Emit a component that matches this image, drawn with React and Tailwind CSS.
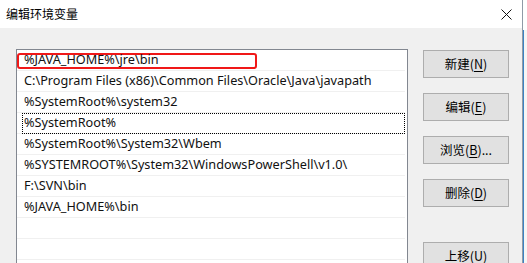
import React from "react";

const rows = [
  "%JAVA_HOME%\\jre\\bin",
  "C:\\Program Files (x86)\\Common Files\\Oracle\\Java\\javapath",
  "%SystemRoot%\\system32",
  "%SystemRoot%",
  "%SystemRoot%\\System32\\Wbem",
  "%SYSTEMROOT%\\System32\\WindowsPowerShell\\v1.0\\",
  "F:\\SVN\\bin",
  "%JAVA_HOME%\\bin",
  "",
  "",
];

const font = { fontFamily: '"Noto Sans", "Noto Sans CJK SC", sans-serif' };

function Btn({ label, hot, tail = "", className = "" }) {
  return (
    <div
      className={`w-[86px] h-[28px] border border-[#adadad] bg-[#e1e1e1] flex items-center justify-center text-[12.5px] text-[#000] ${className}`}
      style={{ fontFamily: '"Noto Sans CJK SC", sans-serif' }}
    >
      <span>
        {label}(<span className="underline underline-offset-2">{hot}</span>){tail}
      </span>
    </div>
  );
}

export default function App() {
  return (
    <div className="w-[527px] h-[263px] overflow-hidden flex bg-[#f0f0f0]">
      <div className="w-[523px] h-full flex flex-col border-r border-[#8f9aa6]">
        <div className="h-[28px] bg-white flex items-center justify-between pl-[6px] pr-[10px] shrink-0">
          <span
            className="text-[12px] text-black"
            style={{ fontFamily: '"Noto Sans CJK SC", sans-serif' }}
          >
            编辑环境变量
          </span>
          <svg width="11" height="11" viewBox="0 0 11 11" className="mt-[1px]">
            <path d="M0.5 0.5 L10.5 10.5 M10.5 0.5 L0.5 10.5" stroke="#111" strokeWidth="1" />
          </svg>
        </div>
        <div className="flex pl-[16px] pt-[21px] gap-[15px]">
          <div className="w-[392px] h-[300px] border border-[#828790] bg-white flex flex-col">
            {rows.map((r, i) => (
              <div
                key={i}
                className="relative h-[21px] shrink-0 border-b border-[#f0f0f0] mr-[2px] flex items-center pl-[7px] text-[12.7px] text-[#111] whitespace-nowrap"
                style={font}
              >
                {i === 0 && (
                  <div className="absolute left-0 top-[3px] w-[240px] h-[16px] border-2 border-[#f01818] rounded-[3px]" />
                )}
                {i === 3 && (
                  <div className="absolute left-[5px] right-0 top-0 bottom-[-1px] border border-dotted border-black" />
                )}
                <span className="relative">{r}</span>
              </div>
            ))}
          </div>
          <div className="flex flex-col pt-[1px]">
            <Btn label="新建" hot="N" />
            <Btn label="编辑" hot="E" className="mt-[15px]" />
            <Btn label="浏览" hot="B" tail="..." className="mt-[15px]" />
            <Btn label="删除" hot="D" className="mt-[15px]" />
            <Btn label="上移" hot="U" className="mt-[35px]" />
          </div>
        </div>
      </div>
      <div className="flex-1 flex flex-col">
        <div className="h-[30px] bg-white" />
        <div className="flex-1 bg-[#f5f5f5] border-l border-[#3b82c4]" />
      </div>
    </div>
  );
}
